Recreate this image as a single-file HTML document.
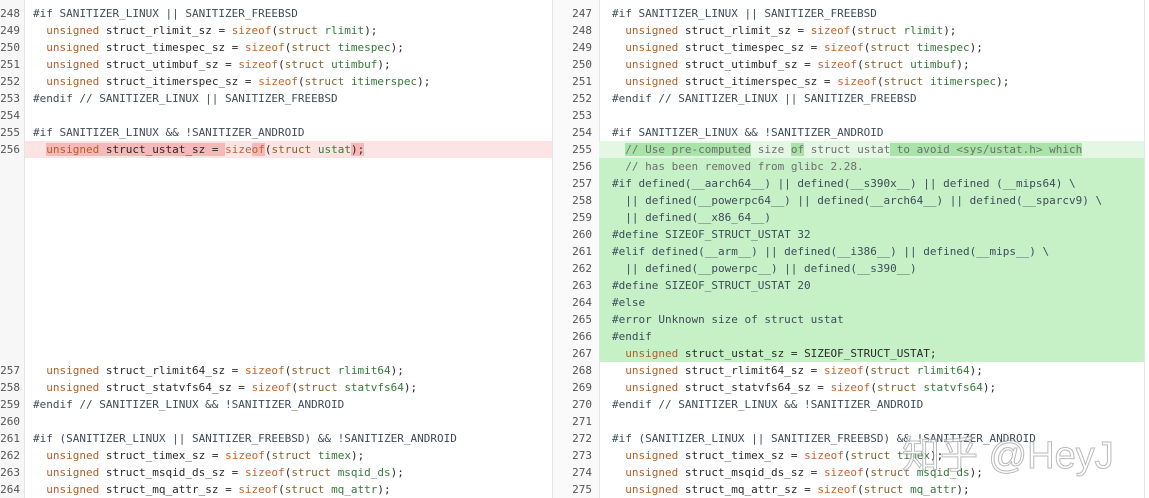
<!DOCTYPE html><html><head><meta charset="utf-8"><style>
body{margin:0;width:1149px;height:498px;overflow:hidden;background:#fff;font-family:"DejaVu Sans Mono","Liberation Mono",monospace;font-size:11px;position:relative}
.r{position:absolute;height:17px;line-height:17px;white-space:pre;color:#2a2a2a}
.n{position:absolute;height:17px;line-height:17px;text-align:right;color:#555;width:22px}
.g{position:absolute;top:0;bottom:0}
.p{color:#3e4c5a}.k{color:#b0602a}.s{color:#85652f}.t{color:#357a3a}.f{color:#c06530}.c{color:#6f6f6f}
.hd{background:#f6b8b8}.ha{background:#a8e4a8}
</style></head><body>
<div class="g" style="left:0;width:24px;background:#f7f7f7;border-right:1px solid #e4e4e4"></div>
<div class="g" style="left:552px;width:46px;background:#fafafa;border-left:1px solid #e4e4e4;border-right:1px solid #e4e4e4"></div>
<div class="g" style="left:1144px;width:1px;background:#e4e4e4"></div>
<div style="position:absolute;left:25px;width:527px;top:141px;height:17px;background:#fde4e4"></div>
<div style="position:absolute;left:599px;width:545px;top:141px;height:17px;background:#e4f7e4"></div>
<div style="position:absolute;left:599px;width:545px;top:158px;height:204px;background:#c6f1c6"></div>
<div id="L"></div>
<div style="position:absolute;left:902px;top:424px;font-family:'Liberation Sans','Noto Sans CJK SC',sans-serif;font-size:38px;color:rgba(255,255,255,0.6);-webkit-text-stroke:1px rgba(140,140,140,0.6);white-space:nowrap">知乎 @HeyJ</div>
<script>
const P=s=>'<span class="p">'+s+'</span>';
function U(name,arg,szf='sizeof'){return '  <span class="k">unsigned</span> '+name+' = <span class="f">'+szf+'</span>(<span class="s">struct</span> <span class="t">'+arg+'</span>);'}
const left=[[248,P('#if SANITIZER_LINUX || SANITIZER_FREEBSD')],[249,U('struct_rlimit_sz','rlimit')],[250,U('struct_timespec_sz','timespec')],[251,U('struct_utimbuf_sz','utimbuf')],[252,U('struct_itimerspec_sz','itimerspec')],[253,P('#endif // SANITIZER_LINUX || SANITIZER_FREEBSD')],[254,''],[255,P('#if SANITIZER_LINUX &amp;&amp; !SANITIZER_ANDROID')],
[256,'  <span class="hd"><span class="k">unsigned</span> struct_ustat_sz = </span><span class="f">size</span><span class="hd"><span class="f">of</span></span>(<span class="s">struct</span> <span class="t">ustat</span><span class="hd">);</span>'],
null,null,null,null,null,null,null,null,null,null,null,null,
[257,U('struct_rlimit64_sz','rlimit64')],[258,U('struct_statvfs64_sz','statvfs64')],[259,P('#endif // SANITIZER_LINUX &amp;&amp; !SANITIZER_ANDROID')],[260,''],[261,P('#if (SANITIZER_LINUX || SANITIZER_FREEBSD) &amp;&amp; !SANITIZER_ANDROID')],[262,U('struct_timex_sz','timex')],[263,U('struct_msqid_ds_sz','msqid_ds')],[264,U('struct_mq_attr_sz','mq_attr')]];
const right=[[247,P('#if SANITIZER_LINUX || SANITIZER_FREEBSD')],[248,U('struct_rlimit_sz','rlimit')],[249,U('struct_timespec_sz','timespec')],[250,U('struct_utimbuf_sz','utimbuf')],[251,U('struct_itimerspec_sz','itimerspec')],[252,P('#endif // SANITIZER_LINUX || SANITIZER_FREEBSD')],[253,''],[254,P('#if SANITIZER_LINUX &amp;&amp; !SANITIZER_ANDROID')],
[255,'  <span class="c"><span class="ha">// Use pre-computed</span> size <span class="ha">of</span> struct ustat<span class="ha"> to avoid &lt;sys/ustat.h&gt; which</span></span>'],
[256,'  <span class="c">// has been removed from glibc 2.28.</span>'],
[257,P('#if defined(__aarch64__) || defined(__s390x__) || defined (__mips64) \\')],
[258,P('  || defined(__powerpc64__) || defined(__arch64__) || defined(__sparcv9) \\')],
[259,P('  || defined(__x86_64__)')],[260,P('#define SIZEOF_STRUCT_USTAT 32')],
[261,P('#elif defined(__arm__) || defined(__i386__) || defined(__mips__) \\')],
[262,P('  || defined(__powerpc__) || defined(__s390__)')],[263,P('#define SIZEOF_STRUCT_USTAT 20')],[264,P('#else')],[265,P('#error Unknown size of struct ustat')],[266,P('#endif')],
[267,'  <span class="k">unsigned</span> struct_ustat_sz = SIZEOF_STRUCT_USTAT;'],
[268,U('struct_rlimit64_sz','rlimit64')],[269,U('struct_statvfs64_sz','statvfs64')],[270,P('#endif // SANITIZER_LINUX &amp;&amp; !SANITIZER_ANDROID')],[271,''],[272,P('#if (SANITIZER_LINUX || SANITIZER_FREEBSD) &amp;&amp; !SANITIZER_ANDROID')],[273,U('struct_timex_sz','timex')],[274,U('struct_msqid_ds_sz','msqid_ds')],[275,U('struct_mq_attr_sz','mq_attr')]];
let h='';
left.forEach((e,i)=>{if(!e)return;const y=5+i*17;h+=`<div class="n" style="left:-2px;top:${y}px">${e[0]}</div><div class="r" style="left:33px;top:${y}px">${e[1]}</div>`});
right.forEach((e,i)=>{const y=5+i*17;h+=`<div class="n" style="left:570px;top:${y}px">${e[0]}</div><div class="r" style="left:612px;top:${y}px">${e[1]}</div>`});
document.getElementById('L').innerHTML=h;
</script></body></html>
